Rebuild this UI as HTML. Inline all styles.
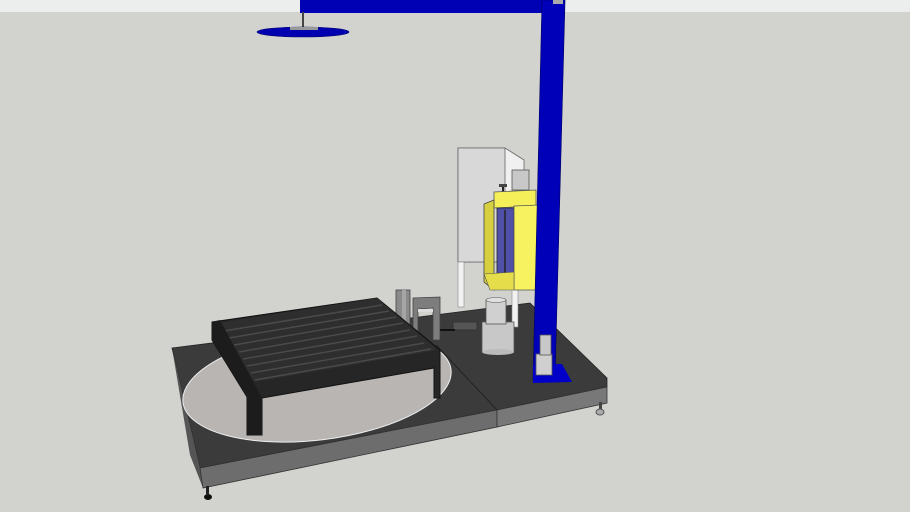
<!DOCTYPE html>
<html><head><meta charset="utf-8"><style>html,body{margin:0;padding:0;width:910px;height:512px;overflow:hidden;background:#d2d3cf}</style></head>
<body>
<svg width="910" height="512" viewBox="0 0 910 512" xmlns="http://www.w3.org/2000/svg">
<rect x="0" y="0" width="910" height="512" fill="#d2d3cf"/>
<rect x="0" y="0" width="910" height="12" fill="#eceeee"/>
<!-- platform -->
<polygon points="172,348 530,303 607,378 607,387 497,410 200,468" fill="#3b3b3b" stroke="#222" stroke-width="0.8"/>
<polygon points="172,348 200,468 203,488 190,455" fill="#555"/>
<polygon points="200,468 497,410 497,427 203,488" fill="#6d6d6d" stroke="#333" stroke-width="0.8"/>
<polygon points="497,410 607,387 607,403 497,427" fill="#787878" stroke="#333" stroke-width="0.8"/>
<line x1="497" y1="410" x2="436" y2="345" stroke="#222" stroke-width="1"/>
<!-- feet -->
<rect x="206" y="486" width="3" height="8" fill="#222"/><ellipse cx="208" cy="497" rx="4" ry="3" fill="#111"/>
<rect x="599" y="402" width="3" height="8" fill="#444"/><ellipse cx="600" cy="412" rx="4" ry="3" fill="#aaa" stroke="#555"/>
<!-- turntable -->
<ellipse cx="317" cy="386" rx="135" ry="54" transform="rotate(-7 317 386)" fill="#b8b5b2" stroke="#eee" stroke-width="1"/>
<!-- gray uprights and arch -->
<rect x="396" y="290" width="14" height="48" fill="#8a8a8a" stroke="#444" stroke-width="0.8"/>
<rect x="402" y="290" width="4" height="48" fill="#a5a5a5"/>
<polygon points="413,298 440,297 440,340 433,340 433,308 418,309 418,340 413,340" fill="#7d7d7d" stroke="#444" stroke-width="0.8"/>
<rect x="418" y="309" width="15" height="3" fill="#ddd"/>
<rect x="453" y="322" width="24" height="8" fill="#555" stroke="#333"/>
<line x1="440" y1="330" x2="455" y2="330" stroke="#111" stroke-width="2"/>
<!-- cabinet -->
<polygon points="458,148 505,148 524,160 524,262 505,262 458,262" fill="#f0f0f0" stroke="#666" stroke-width="0.8"/>
<polygon points="458,148 505,148 505,262 458,262" fill="#d8d8d8" stroke="#666" stroke-width="0.8"/>
<rect x="458" y="262" width="6" height="45" fill="#f2f2f2" stroke="#888" stroke-width="0.6"/>
<rect x="512" y="262" width="6" height="65" fill="#f2f2f2" stroke="#888" stroke-width="0.6"/>
<!-- cylinders -->
<rect x="482" y="322" width="32" height="30" fill="#c8c8c8" stroke="#555" stroke-width="0.8"/>
<ellipse cx="498" cy="352" rx="16" ry="3" fill="#bbb"/>
<rect x="486" y="300" width="20" height="24" fill="#d0d0d0" stroke="#555" stroke-width="0.8"/>
<ellipse cx="496" cy="300" rx="10" ry="2.5" fill="#e0e0e0" stroke="#555" stroke-width="0.6"/>
<!-- yellow carriage -->
<rect x="512" y="170" width="17" height="20" fill="#c8c8c8" stroke="#555" stroke-width="0.8"/>
<rect x="499" y="184" width="8" height="3" fill="#444"/><rect x="502" y="187" width="2" height="6" fill="#222"/>
<polygon points="494,192 536,190 536,206 494,208" fill="#f5ef5a" stroke="#555" stroke-width="0.8"/>
<polygon points="484,204 494,200 494,290 484,282" fill="#d6cf40" stroke="#444" stroke-width="0.8"/>
<polygon points="497,208 514,208 514,286 497,286" fill="#5050a8" stroke="#222" stroke-width="0.8"/>
<line x1="505" y1="210" x2="505" y2="285" stroke="#222" stroke-width="1.5"/>
<polygon points="514,206 539,205 539,290 514,290" fill="#f7f25f" stroke="#555" stroke-width="0.8"/>
<polygon points="484,274 514,272 514,290 490,290" fill="#e5de4a" stroke="#555" stroke-width="0.6"/>
<!-- conveyor -->
<polygon points="212,322 377,298 440,350 440,398 434,398 434,368 262,398 262,435 247,435 247,397 212,340" fill="#262626" stroke="#111" stroke-width="1"/>
<polygon points="218,323 377,298 438,350 254,382" fill="#2e2e2e"/>
<g stroke="#4a4a4a" stroke-width="1.5">
<line x1="224" y1="331" x2="382" y2="305"/><line x1="229" y1="338" x2="389" y2="311"/>
<line x1="234" y1="345" x2="396" y2="317"/><line x1="239" y1="352" x2="403" y2="323"/>
<line x1="243" y1="359" x2="410" y2="330"/><line x1="247" y1="366" x2="417" y2="336"/>
<line x1="251" y1="373" x2="424" y2="343"/><line x1="255" y1="380" x2="431" y2="349"/>
</g>
<polygon points="212,322 220,320 262,398 262,435 247,435 247,397 212,340" fill="#1c1c1c"/>
<!-- blue structure -->
<rect x="300" y="0" width="255" height="13" fill="#0000b4"/>
<polygon points="542,0 565,0 565,2 555,380 533,380" fill="#0000b8" stroke="#000060" stroke-width="0.6"/>
<rect x="553" y="0" width="10" height="4" fill="#aaa"/>
<polygon points="533,365 562,364 572,382 533,383" fill="#0000c8"/>
<rect x="302" y="12" width="2" height="16" fill="#444"/>
<ellipse cx="303" cy="32" rx="46" ry="5" fill="#0000b0" stroke="#000070" stroke-width="0.6"/>
<rect x="290" y="27" width="28" height="3" fill="#999"/>
<!-- small motor -->
<rect x="536" y="354" width="16" height="21" fill="#cfcfcf" stroke="#555" stroke-width="0.8"/>
<rect x="540" y="335" width="11" height="20" fill="#c8c8c8" stroke="#555" stroke-width="0.8"/>
</svg>
</body></html>
